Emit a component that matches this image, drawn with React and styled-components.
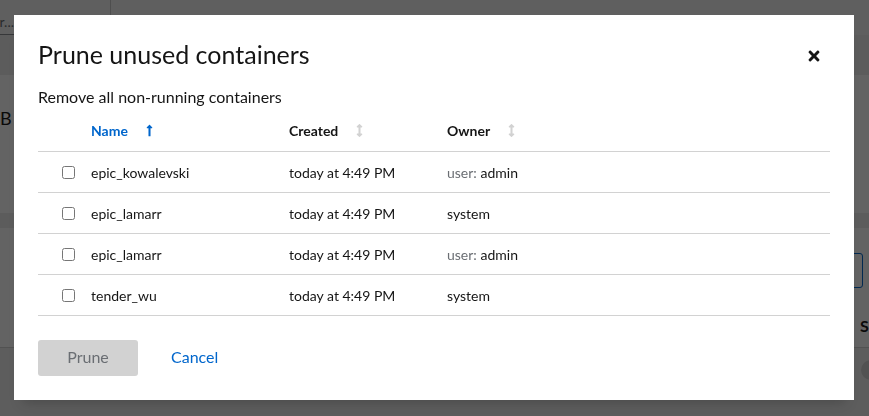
import React from "react";
import styled, { createGlobalStyle } from "styled-components";

const GlobalStyle = createGlobalStyle`
  html, body {
    margin: 0;
    padding: 0;
  }
  body {
    width: 869px;
    height: 416px;
    overflow: hidden;
    font-family: "Lato", "Liberation Sans", sans-serif;
    color: #151515;
    background: #fff;
  }
`;

// page behind the backdrop
const Page = styled.div`
  width: 869px;
  height: 416px;
  display: flex;
  flex-direction: column;
  background: #fff;
`;

const TopBar = styled.div`
  height: 35px;
  flex-shrink: 0;
  display: flex;
  background: #f5f5f5;
`;

const FilterBox = styled.div`
  width: 110px;
  display: flex;
  border-right: 1px solid #c7c7c7;
`;

const FilterInput = styled.div`
  width: 14px;
  height: 26px;
  margin-top: 8px;
  display: flex;
  justify-content: flex-end;
  align-items: center;
  font-size: 14px;
  color: #6a6e73;
  border-bottom: 1px solid #8a8d90;
`;

const Band = styled.div`
  height: ${(p) => p.h}px;
  flex-shrink: 0;
  background: #ececec;
`;

const Section = styled.div`
  height: ${(p) => p.h}px;
  flex-shrink: 0;
  display: flex;
  justify-content: space-between;
  border-bottom: ${(p) => (p.line ? "1px solid #d2d2d2" : "none")};
  box-sizing: border-box;
`;

const BigValue = styled.div`
  margin-top: 33px;
  font-size: 18px;
  line-height: 20px;
`;

const SideColumn = styled.div`
  width: 40px;
  display: flex;
  flex-direction: column;
  margin-right: 6px;
`;

const SideInput = styled.div`
  height: 35px;
  margin-top: 25px;
  border: 1px solid #06c;
  border-radius: 3px;
  box-sizing: border-box;
`;

const SideLabel = styled.div`
  margin-top: 28px;
  padding-left: 37px;
  font-size: 16px;
  font-weight: 700;
`;

const Bottom = styled.div`
  flex: 1;
  display: flex;
  justify-content: flex-end;
  background: #f0f0f0;
`;

const Dot = styled.div`
  width: 20px;
  height: 20px;
  margin: 12px -12px 0 0;
  border-radius: 50%;
  background: #d2d2d2;
`;

// modal
const Backdrop = styled.div`
  position: fixed;
  inset: 0;
  background: rgba(3, 3, 3, 0.62);
  display: flex;
  align-items: flex-start;
`;

const Modal = styled.div`
  width: 840px;
  margin: 15px 0 0 14px;
  padding: 24px;
  box-sizing: border-box;
  background: #fff;
  box-shadow: 0 0.75rem 0.75rem -0.5rem rgba(3, 3, 3, 0.18);
`;

const ModalHeader = styled.div`
  height: 30px;
  display: flex;
  justify-content: space-between;
  align-items: center;
`;

const Title = styled.h1`
  margin: 0;
  font-size: 25px;
  font-weight: 400;
  line-height: 30px;
`;

const CloseButton = styled.button`
  border: 0;
  background: none;
  padding: 0 10px;
  margin-top: 4px;
  display: flex;
  color: #151515;
  cursor: pointer;
`;

const Description = styled.p`
  margin: 16px 0 0;
  font-size: 16px;
  line-height: 24px;
`;

const Row = styled.div`
  display: grid;
  grid-template-columns: 53px 198px 158px 1fr;
  align-items: center;
  height: 41px;
  box-sizing: border-box;
  border-bottom: 1px solid #d2d2d2;
  font-size: 14px;
`;

const HeadRow = styled(Row)`
  margin-top: 1px;
  height: 42px;
  padding-bottom: 1px;
  font-weight: 700;
`;

const SortButton = styled.span`
  display: inline-flex;
  align-items: center;
  gap: 18px;
  color: ${(p) => (p.active ? "#06c" : "#151515")};
`;

const SortIcon = styled.svg`
  width: 7px;
  height: 13px;
  fill: ${(p) => (p.active ? "#06c" : "#d2d2d2")};
`;

const CheckCell = styled.div`
  padding-left: 24px;
  display: flex;
`;

const Check = styled.input`
  width: 13px;
  height: 13px;
  margin: 0;
`;

const Muted = styled.span`
  color: #6a6e73;
`;

const Footer = styled.div`
  margin-top: 24px;
  display: flex;
  align-items: center;
  gap: 17px;
`;

const PruneButton = styled.button`
  width: 100px;
  height: 36px;
  padding: 0 0 3px;
  border: 0;
  border-radius: 3px;
  background: #d2d2d2;
  color: #6a6e73;
  font-family: inherit;
  font-size: 16px;
`;

const LinkButton = styled.button`
  border: 0;
  background: none;
  padding: 0 16px 3px;
  color: #06c;
  font-family: inherit;
  font-size: 16px;
  cursor: pointer;
`;

const ARROW_UP =
  "M88 166.059V468c0 6.627 5.373 12 12 12h56c6.627 0 12-5.373 12-12V166.059h46.059c21.382 0 32.09-25.851 16.971-40.971l-86.059-86.059c-9.373-9.373-24.569-9.373-33.941 0l-86.059 86.059c-15.119 15.119-4.411 40.971 16.971 40.971H88z";
const ARROWS_V =
  "M214.059 377.941H168V134.059h46.059c21.382 0 32.09-25.851 16.971-40.971L144.971 7.029c-9.373-9.373-24.568-9.373-33.941 0L24.971 93.088c-15.119 15.119-4.411 40.971 16.971 40.971H88v243.882H41.941c-21.382 0-32.09 25.851-16.971 40.971l86.059 86.059c9.373 9.373 24.568 9.373 33.941 0l86.059-86.059c15.12-15.119 4.412-40.971-16.97-40.971z";

const containers = [
  { name: "epic_kowalevski", created: "today at 4:49 PM", user: "admin" },
  { name: "epic_lamarr", created: "today at 4:49 PM", user: null },
  { name: "epic_lamarr", created: "today at 4:49 PM", user: "admin" },
  { name: "tender_wu", created: "today at 4:49 PM", user: null },
];

const Header = ({ label, active }) => (
  <SortButton active={active}>
    {label}
    <SortIcon viewBox="0 0 256 512" active={active}>
      <path d={active ? ARROW_UP : ARROWS_V} />
    </SortIcon>
  </SortButton>
);

const App = () => {
  return (
    <>
      <GlobalStyle />
      <Page>
        <TopBar>
          <FilterBox>
            <FilterInput>
              <span>r...</span>
            </FilterInput>
          </FilterBox>
        </TopBar>
        <Band h={40} />
        <Section h={138}>
          <BigValue>B</BigValue>
        </Section>
        <Band h={15} />
        <Section h={120} line>
          <span />
          <SideColumn>
            <SideInput />
            <SideLabel>S</SideLabel>
          </SideColumn>
        </Section>
        <Bottom>
          <Dot />
        </Bottom>
      </Page>

      <Backdrop>
        <Modal>
          <ModalHeader>
            <Title>Prune unused containers</Title>
            <CloseButton aria-label="Close">
              <svg width="12" height="16" viewBox="0 0 352 512" fill="currentColor">
                <path d="M242.72 256l100.07-100.07c12.28-12.28 12.28-32.19 0-44.48l-22.24-22.24c-12.28-12.28-32.19-12.28-44.48 0L176 189.28 75.930 89.21c-12.28-12.28-32.19-12.28-44.48 0L9.21 111.45c-12.28 12.28-12.28 32.19 0 44.48L109.28 256 9.21 356.070c-12.28 12.28-12.28 32.19 0 44.48l22.24 22.24c12.28 12.28 32.2 12.28 44.48 0L176 322.72l100.07 100.07c12.28 12.28 32.2 12.28 44.48 0l22.24-22.24c12.28-12.28 12.28-32.19 0-44.48L242.72 256z" />
              </svg>
            </CloseButton>
          </ModalHeader>
          <Description>Remove all non-running containers</Description>

          <HeadRow>
            <span />
            <span>
              <Header label="Name" active />
            </span>
            <span>
              <Header label="Created" />
            </span>
            <span>
              <Header label="Owner" />
            </span>
          </HeadRow>
          {containers.map((c, i) => (
            <Row key={i}>
              <CheckCell>
                <Check type="checkbox" />
              </CheckCell>
              <span>{c.name}</span>
              <span>{c.created}</span>
              <span>
                {c.user ? (
                  <>
                    <Muted>user: </Muted>
                    {c.user}
                  </>
                ) : (
                  "system"
                )}
              </span>
            </Row>
          ))}

          <Footer>
            <PruneButton disabled>Prune</PruneButton>
            <LinkButton>Cancel</LinkButton>
          </Footer>
        </Modal>
      </Backdrop>
    </>
  );
};

export default App;
